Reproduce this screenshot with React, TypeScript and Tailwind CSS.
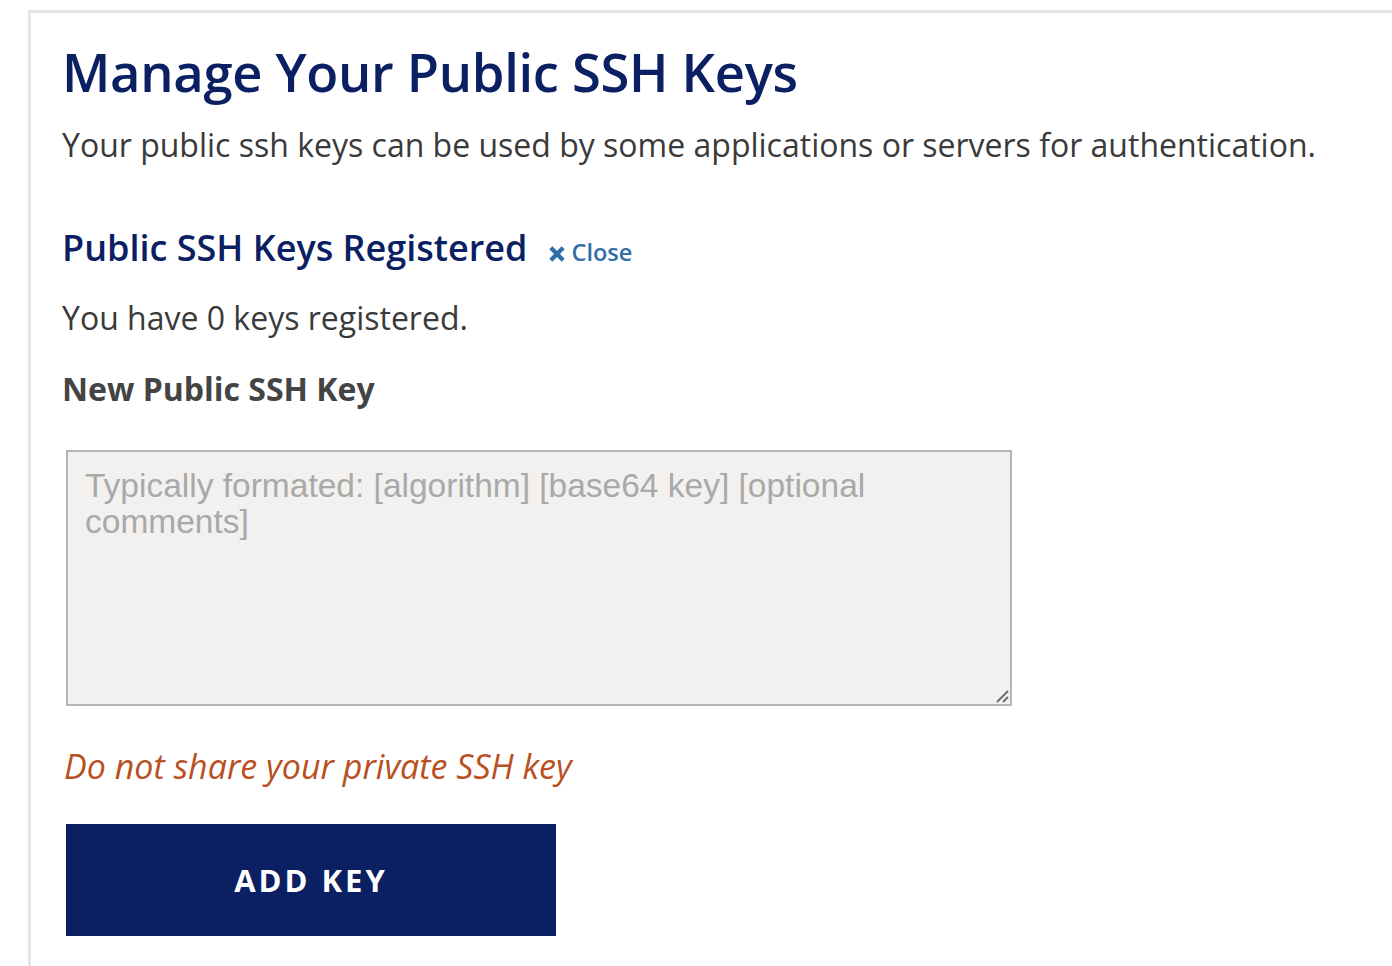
import React from "react";

export default function App() {
  return (
    <div className="min-h-[966px] bg-white pt-[10px] pl-[28px]" style={{ fontFamily: '"Open Sans", sans-serif' }}>
      <div className="min-h-[956px] border-l-[3px] border-t-[3px] border-[#e5e5e5] pl-[31px] pt-[24px] pb-[30px]">
        <h1 className="text-[52.5px] leading-[70px] font-semibold text-[#0b2063] tracking-[-0.3px]">Manage Your Public SSH Keys</h1>
        <p className="mt-[16px] text-[32px] leading-[44px] text-[#3a3a3a]">
          Your public ssh keys can be used by some applications or servers for authentication.
        </p>
        <div className="mt-[56px] flex items-baseline gap-[20px]">
          <h2 className="text-[36px] leading-[50px] font-semibold text-[#0b2063]">Public SSH Keys Registered</h2>
          <button className="relative top-[2px] flex items-center gap-[6px] text-[23.5px] font-semibold text-[#2f6ea6]">
            <svg width="18" height="18" viewBox="0 0 16 16" className="mt-[2px]">
              <path d="M2.5 2.5 L13.5 13.5 M13.5 2.5 L2.5 13.5" stroke="#2f6ea6" strokeWidth="3.8" strokeLinecap="butt" />
            </svg>
            Close
          </button>
        </div>
        <p className="mt-[23px] text-[32px] leading-[44px] text-[#3a3a3a]">You have 0 keys registered.</p>
        <h3 className="mt-[27px] text-[32px] leading-[44px] font-bold text-[#444]">New Public SSH Key</h3>
        <div className="relative mt-[39px] ml-[4px] w-[946px] h-[256px]">
          <textarea
            className="block w-full h-full resize-none bg-[#f2f1f0] border-2 border-[#b5b5b5] px-[17px] py-[16px] text-[33.5px] leading-[36px] text-[#555] placeholder:text-[#a9a9a9] outline-none"
            style={{ fontFamily: '"Liberation Sans", Arial, sans-serif' }}
            placeholder="Typically formated: [algorithm] [base64 key] [optional comments]"
          />
          <svg width="14" height="14" viewBox="0 0 14 14" className="absolute right-[3px] bottom-[3px] pointer-events-none">
            <path d="M2 13 L13 2 M8 13 L13 8" stroke="#6b6b6b" strokeWidth="1.8" />
          </svg>
        </div>
        <p className="mt-[38px] ml-[2px] text-[34px] leading-[44px] italic text-[#b8501f]">Do not share your private SSH key</p>
        <button className="mt-[36px] ml-[4px] block w-[490px] h-[112px] bg-[#0b2063] text-white text-[31px] font-bold tracking-[3px]">
          ADD KEY
        </button>
      </div>
    </div>
  );
}
